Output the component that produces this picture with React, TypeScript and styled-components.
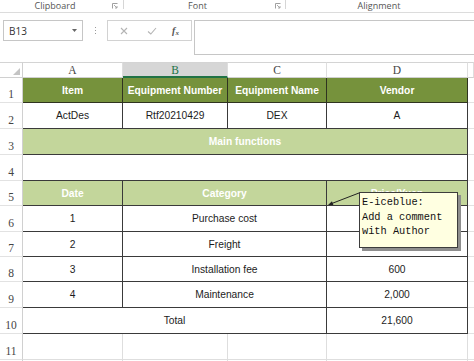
import React from "react";
import styled, { createGlobalStyle } from "styled-components";

const Global = createGlobalStyle`
  html, body { margin: 0; padding: 0; background: #fff; overflow: hidden; }
  #root { width: 474px; height: 361px; }
`;

const Frame = styled.div`
  width: 474px;
  height: 361px;
  overflow: hidden;
  display: flex;
  flex-direction: column;
  background: #fff;
  font-family: "Open Sans", "Noto Sans", sans-serif;
`;

/* ---------- ribbon group labels ---------- */
const Ribbon = styled.div`
  height: 12px;
  flex-shrink: 0;
  display: flex;
  border-bottom: 1px solid #dcdcdc;
`;

const Group = styled.div<{ $w: number; $labelW: number; $gap: number }>`
  width: ${(p) => p.$w}px;
  flex-shrink: 0;
  display: grid;
  grid-template-columns: ${(p) => p.$labelW}px 6px 1fr;
  column-gap: ${(p) => p.$gap}px;
  align-items: center;
  height: 12px;
`;

const GroupLabel = styled.span`
  text-align: center;
  font-size: 9px;
  line-height: 12px;
  color: #555;
  white-space: nowrap;
`;

const Separator = styled.span`
  justify-self: end;
  align-self: start;
  width: 1px;
  height: 9px;
  background: #d6d6d6;
`;

const Launcher = () => (
  <svg width="6" height="6" viewBox="0 0 6 6">
    <path d="M0.5 5.5V0.5H5.5" fill="none" stroke="#a0a0a0" strokeWidth="1" />
    <path d="M2 2L5 5M5 3V5H3" fill="none" stroke="#a0a0a0" strokeWidth="0.9" />
  </svg>
);

/* ---------- formula bar ---------- */
const FormulaBar = styled.div`
  height: 49px;
  flex-shrink: 0;
  box-sizing: border-box;
  padding: 7px 0 0 3px;
  display: flex;
  align-items: flex-start;
`;

const NameBox = styled.div`
  width: 80px;
  height: 21px;
  box-sizing: border-box;
  border: 1px solid #c6c6c6;
  display: flex;
  align-items: center;
  justify-content: space-between;
  padding: 0 5px 0 5px;
  font-size: 10px;
  color: #333;
`;

const Dots = styled.div`
  width: 24px;
  height: 21px;
  display: flex;
  flex-direction: column;
  align-items: center;
  justify-content: center;
  gap: 2px;
`;

const Dot = styled.span`
  width: 1px;
  height: 1px;
  background: #9a9a9a;
`;

const ButtonBox = styled.div`
  width: 85px;
  height: 21px;
  box-sizing: border-box;
  border: 1px solid #d2d2d2;
  display: grid;
  grid-template-columns: 29px 28px 1fr;
  align-items: center;
  justify-items: center;
  padding-left: 1px;
`;

const Fx = styled.span`
  font-family: "Liberation Serif", serif;
  font-style: italic;
  font-weight: bold;
  font-size: 10px;
  color: #555;
  margin-right: 6px;
  & sub {
    font-size: 7px;
    vertical-align: -1px;
  }
`;

const FormulaInput = styled.div`
  flex: 1;
  margin-left: 2px;
  height: 35px;
  box-sizing: border-box;
  border: 1px solid #c6c6c6;
  border-right: none;
`;

/* ---------- sheet ---------- */
const Sheet = styled.div`
  position: relative;
  flex: 1;
  display: grid;
  grid-template-columns: 23px 100px 105px 99px 141px 1fr;
  grid-template-rows: 16px 25px 26px 26px 26px 25px 26px 25px 25px 26px 26px 26px 1fr;
  font-family: "Liberation Sans", Arial, sans-serif;
  font-size: 10.25px;
`;

const ColHead = styled.div<{ $sel?: boolean }>`
  box-sizing: border-box;
  border-top: 1px solid #d4d4d4;
  border-right: 1px solid #dedede;
  border-bottom: ${(p) => (p.$sel ? "2px solid #217346" : "1px solid #d0d0d0")};
  background: ${(p) => (p.$sel ? "#d6d6d6" : "#fff")};
  color: ${(p) => (p.$sel ? "#217346" : "#444")};
  font-family: "Liberation Serif", serif;
  font-size: 11.5px;
  display: flex;
  align-items: center;
  justify-content: center;
  line-height: 1;
  padding-top: 2px;
`;

const Corner = styled.div`
  box-sizing: border-box;
  border-top: 1px solid #d4d4d4;
  border-right: 1px solid #d0d0d0;
  border-bottom: 1px solid #d0d0d0;
  display: flex;
  align-items: flex-end;
  justify-content: flex-end;
  padding: 0 2px 2px 0;
`;

const CornerTriangle = styled.span`
  width: 0;
  height: 0;
  border-left: 7px solid transparent;
  border-bottom: 7px solid #c4c4c4;
`;

const RowHead = styled.div`
  box-sizing: border-box;
  border-right: 1px solid #d0d0d0;
  border-bottom: 1px solid #e2e2e2;
  display: flex;
  align-items: flex-end;
  justify-content: center;
  padding-bottom: 2px;
  font-family: "Liberation Serif", serif;
  font-size: 11.5px;
  color: #444;
  line-height: 1;
`;

type Kind = "head" | "sub" | "data" | "blank" | "grid" | "edge";

const palette: Record<Kind, { bg: string; fg: string; weight: number; line: string }> = {
  head: { bg: "#76923c", fg: "#fff", weight: 700, line: "#2f3320" },
  sub: { bg: "#c3d69b", fg: "#fff", weight: 700, line: "#3a3a3a" },
  data: { bg: "#fff", fg: "#1c1c1c", weight: 400, line: "#3a3a3a" },
  blank: { bg: "#fff", fg: "#1c1c1c", weight: 400, line: "#3a3a3a" },
  grid: { bg: "#fff", fg: "#1c1c1c", weight: 400, line: "#dedede" },
  edge: { bg: "#fff", fg: "#1c1c1c", weight: 400, line: "#e2e2e2" },
};

const Cell = styled.div<{ $kind: Kind; $span: number }>`
  grid-column: span ${(p) => p.$span};
  box-sizing: border-box;
  background: ${(p) => palette[p.$kind].bg};
  color: ${(p) => palette[p.$kind].fg};
  font-weight: ${(p) => palette[p.$kind].weight};
  border-right: ${(p) => (p.$kind === "edge" ? "none" : `1px solid ${palette[p.$kind].line}`)};
  border-bottom: 1px solid ${(p) => palette[p.$kind].line};
  display: flex;
  align-items: center;
  justify-content: center;
  white-space: nowrap;
  overflow: hidden;
`;

/* ---------- comment ---------- */
const Comment = styled.div`
  position: absolute;
  left: 359px;
  top: 130px;
  width: 99px;
  height: 56px;
  box-sizing: border-box;
  background: #ffffe1;
  border: 1px solid #3c3c3c;
  box-shadow: 3px 3px 0 #8e8e8e;
  padding: 2px 0 0 2px;
  font-family: "Liberation Mono", monospace;
  font-size: 10.3px;
  line-height: 14.6px;
  color: #111;
  white-space: pre;
  z-index: 2;
`;

const Pointer = styled.svg`
  position: absolute;
  left: 324px;
  top: 127px;
  z-index: 2;
`;

interface CellDef {
  kind: Kind;
  text?: string;
  span?: number;
}

const d = (text = "", span = 1): CellDef => ({ kind: "data", text, span });

const rows: CellDef[][] = [
  [
    { kind: "head", text: "Item" },
    { kind: "head", text: "Equipment Number" },
    { kind: "head", text: "Equipment Name" },
    { kind: "head", text: "Vendor" },
  ],
  [d("ActDes"), d("Rtf20210429"), d("DEX"), d("A")],
  [{ kind: "sub", text: "Main functions", span: 4 }],
  [{ kind: "blank", span: 4 }],
  [
    { kind: "sub", text: "Date" },
    { kind: "sub", text: "Category", span: 2 },
    { kind: "sub", text: "Price/Yuan" },
  ],
  [d("1"), d("Purchase cost", 2), d("")],
  [d("2"), d("Freight", 2), d("")],
  [d("3"), d("Installation fee", 2), d("600")],
  [d("4"), d("Maintenance", 2), d("2,000")],
  [d("Total", 3), d("21,600")],
  [{ kind: "grid" }, { kind: "grid" }, { kind: "grid" }, { kind: "grid" }],
  [{ kind: "grid" }, { kind: "grid" }, { kind: "grid" }, { kind: "grid" }],
];

const columns = ["A", "B", "C", "D"];

export default function App() {
  return (
    <>
      <Global />
      <Frame>
        <Ribbon>
          <Group $w={124} $labelW={110} $gap={2}>
            <GroupLabel>Clipboard</GroupLabel>
            <Launcher />
            <Separator />
          </Group>
          <Group $w={160} $labelW={147} $gap={4}>
            <GroupLabel>Font</GroupLabel>
            <Launcher />
            <Separator />
          </Group>
          <Group $w={190} $labelW={190} $gap={0}>
            <GroupLabel>Alignment</GroupLabel>
          </Group>
        </Ribbon>

        <FormulaBar>
          <NameBox>
            <span>B13</span>
            <svg width="5" height="3" viewBox="0 0 5 3">
              <path d="M0 0H5L2.5 3Z" fill="#666" />
            </svg>
          </NameBox>
          <Dots>
            <Dot />
            <Dot />
            <Dot />
          </Dots>
          <ButtonBox>
            <svg width="8" height="8" viewBox="0 0 8 8">
              <path d="M1 1L7 7M7 1L1 7" stroke="#b4b4b4" strokeWidth="1.1" />
            </svg>
            <svg width="10" height="8" viewBox="0 0 10 8">
              <path d="M1 4.5L3.8 7L9 1" fill="none" stroke="#b4b4b4" strokeWidth="1.1" />
            </svg>
            <Fx>
              f<sub>x</sub>
            </Fx>
          </ButtonBox>
          <FormulaInput />
        </FormulaBar>

        <Sheet>
          <Corner>
            <CornerTriangle />
          </Corner>
          {columns.map((c) => (
            <ColHead key={c} $sel={c === "B"}>
              {c}
            </ColHead>
          ))}
          <ColHead />

          {rows.map((cells, i) => (
            <React.Fragment key={i}>
              <RowHead>{i < 11 ? i + 1 : ""}</RowHead>
              {cells.map((c, j) => (
                <Cell key={j} $kind={c.kind} $span={c.span ?? 1}>
                  {c.text}
                </Cell>
              ))}
              <Cell $kind="edge" $span={1} />
            </React.Fragment>
          ))}

          <Pointer width="38" height="20" viewBox="0 0 38 20">
            <line x1="6" y1="15.2" x2="35" y2="4" stroke="#222" strokeWidth="1" />
            <path d="M4 16L9.4 16.1L8 12.3Z" fill="#222" />
          </Pointer>
          <Comment>{"E-iceblue:\nAdd a comment\nwith Author"}</Comment>
        </Sheet>
      </Frame>
    </>
  );
}
